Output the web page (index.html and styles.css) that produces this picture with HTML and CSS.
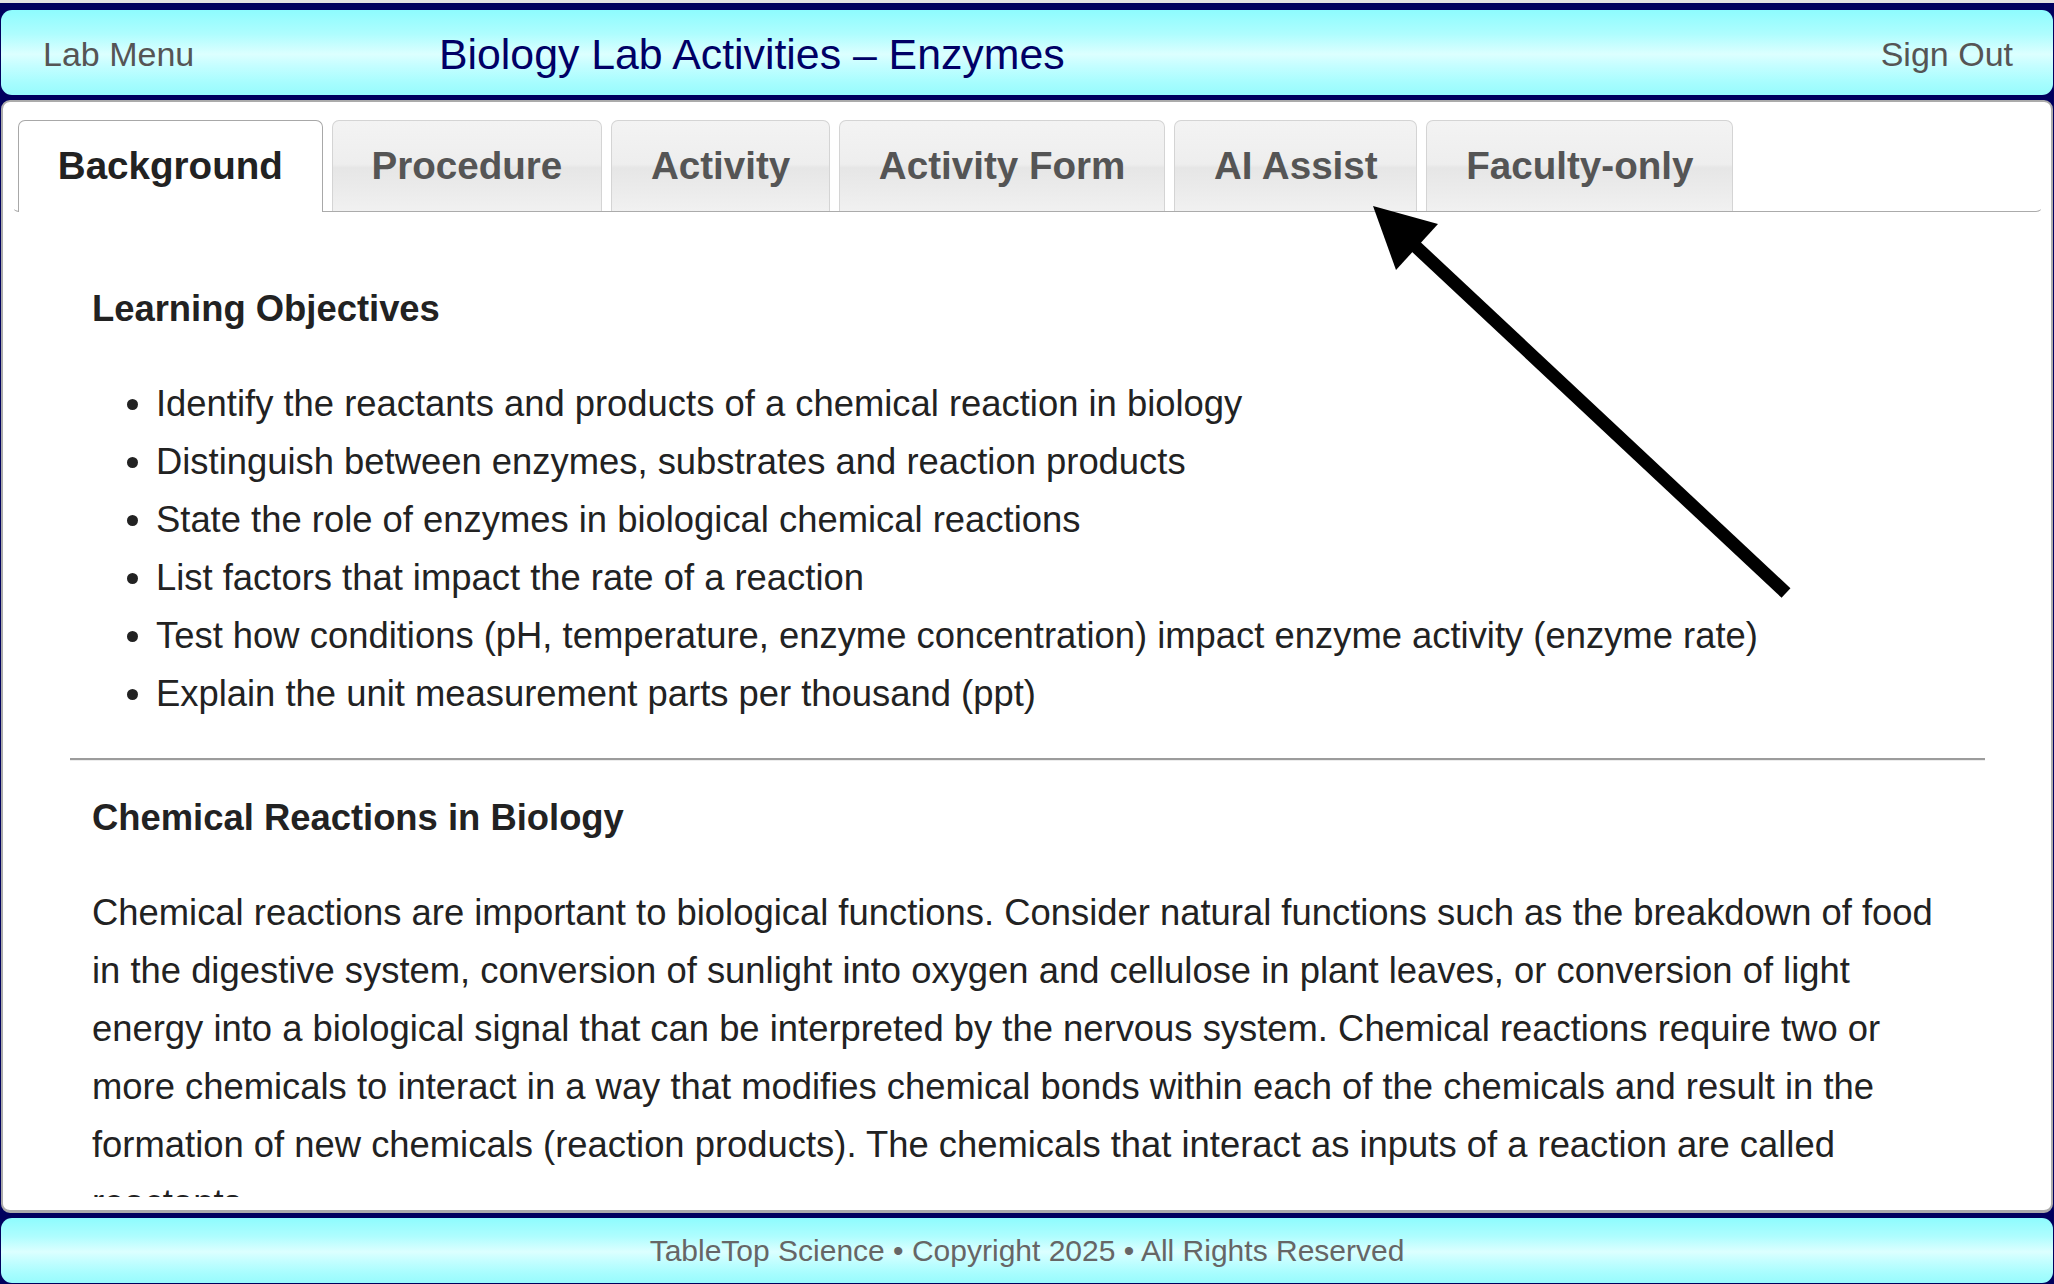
FILE: index.html
```html
<!DOCTYPE html>
<html lang="en">
<head>
<meta charset="utf-8">
<title>Biology Lab Activities – Enzymes</title>
<link rel="stylesheet" href="styles.css">
</head>
<body>
<div class="topstrip"></div>
<div class="page">
  <header class="header">
    <a class="lab-menu">Lab Menu</a>
    <h1 class="title">Biology Lab Activities – Enzymes</h1>
    <a class="sign-out">Sign Out</a>
  </header>

  <main class="panel">
    <nav class="tabs">
      <div class="tab active">Background</div>
      <div class="tab">Procedure</div>
      <div class="tab">Activity</div>
      <div class="tab">Activity Form</div>
      <div class="tab">AI Assist</div>
      <div class="tab">Faculty-only</div>
    </nav>
    <section class="content">
      <h3>Learning Objectives</h3>
      <ul>
        <li>Identify the reactants and products of a chemical reaction in biology</li>
        <li>Distinguish between enzymes, substrates and reaction products</li>
        <li>State the role of enzymes in biological chemical reactions</li>
        <li>List factors that impact the rate of a reaction</li>
        <li>Test how conditions (pH, temperature, enzyme concentration) impact enzyme activity (enzyme rate)</li>
        <li>Explain the unit measurement parts per thousand (ppt)</li>
      </ul>
      <hr>
      <h3>Chemical Reactions in Biology</h3>
      <p>Chemical reactions are important to biological functions. Consider natural functions such as the breakdown of food in the digestive system, conversion of sunlight into oxygen and cellulose in plant leaves, or conversion of light energy into a biological signal that can be interpreted by the nervous system. Chemical reactions require two or more chemicals to interact in a way that modifies chemical bonds within each of the chemicals and result in the formation of new chemicals (reaction products). The chemicals that interact as inputs of a reaction are called reactants.</p>
    </section>
  </main>

  <footer class="footer">TableTop Science • Copyright 2025 • All Rights Reserved</footer>
</div>

<svg class="arrow" width="440" height="420" viewBox="0 0 440 420" aria-hidden="true">
  <line x1="52" y1="53" x2="426" y2="403" stroke="#000" stroke-width="13" stroke-linecap="butt"/>
  <polygon points="13,16 78,34 36,80" fill="#000"/>
</svg>
</body>
</html>
```

FILE: styles.css
```css
html, body {
  margin: 0;
  padding: 0;
}

body {
  width: 2054px;
  height: 1284px;
  overflow: hidden;
  background: #00005e;
  font-family: "Liberation Sans", Arial, Helvetica, sans-serif;
  position: relative;
}

.topstrip {
  height: 3px;
  background: #e2e2e2;
}

.page {
  display: flex;
  flex-direction: column;
  gap: 5px;
  padding: 7px 1px 1px;
  height: 1281px;
  box-sizing: border-box;
}

.header {
  height: 85px;
  flex: none;
  box-sizing: border-box;
  display: flex;
  align-items: center;
  padding: 3px 40px 0 42px;
  border-radius: 11px;
  background: linear-gradient(to bottom, #8efcfe 0%, #aefdfe 28%, #dcffff 52%, #c4feff 66%, #a6fdfe 86%, #98fbfd 100%);
}

.lab-menu {
  width: 396px;
  font-size: 34px;
  color: #555;
}

.title {
  margin: 0;
  font-weight: normal;
  font-size: 42.8px;
  color: #000066;
}

.sign-out {
  margin-left: auto;
  font-size: 34px;
  color: #555;
}

.panel {
  height: 1113px;
  flex: none;
  box-sizing: border-box;
  background: #fff;
  border: 2px solid #ababab;
  border-bottom-width: 3px;
  border-radius: 9px;
  padding: 17px 0 13px;
  display: flex;
  flex-direction: column;
}

.tabs {
  display: flex;
  align-items: flex-start;
  gap: 9px;
  margin: 0 8px 0 9px;
  padding-left: 5px;
  border: 1px solid transparent;
  border-bottom-color: #ababab;
  border-radius: 7px;
  flex: none;
}

.tab {
  height: 91px;
  box-sizing: border-box;
  padding: 23px 38.8px 0;
  line-height: 44px;
  font-size: 38.6px;
  font-weight: bold;
  color: #555;
  border: 1px solid #d4d4d4;
  border-bottom: none;
  border-radius: 7px 7px 0 0;
  background: linear-gradient(to bottom, #f3f3f3 0%, #eeeeee 48%, #e6e6e6 52%, #ececec 80%, #f1f1f1 100%);
}

.tab.active {
  color: #222;
  background: #fff;
  border-color: #a8a8a8;
  height: 92px;
  margin-bottom: -1px;
}

.content {
  flex: 1;
  overflow: hidden;
  padding: 77px 66px 0 67px;
  color: #222;
  font-size: 36.4px;
}

.content h3 {
  margin: 0 0 46px 22px;
  font-size: 36.4px;
  line-height: 40px;
  font-weight: bold;
  color: #222;
}

.content ul {
  margin: 0 0 0 22px;
  padding-left: 64px;
  line-height: 58px;
}

.content hr {
  margin: 35px 0 37px;
  border: none;
  border-top: 2px solid #9c9c9c;
  border-bottom: 1px solid #ececec;
  height: 0;
}

.content p {
  margin: 0 45px 0 22px;
  line-height: 58px;
}

.footer {
  height: 65px;
  flex: none;
  display: flex;
  align-items: center;
  justify-content: center;
  font-size: 30px;
  color: #666;
  border-radius: 11px;
  background: linear-gradient(to bottom, #8efcfe 0%, #aefdfe 28%, #dcffff 52%, #c4feff 66%, #a6fdfe 86%, #98fbfd 100%);
}

.arrow {
  position: absolute;
  left: 1360px;
  top: 190px;
}
```
